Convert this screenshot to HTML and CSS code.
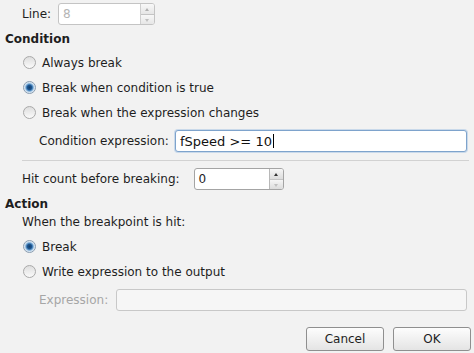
FILE: index.html
```html
<!DOCTYPE html>
<html>
<head>
<meta charset="utf-8">
<link rel="stylesheet" href="styles.css">
</head>
<body>
<div class="dlg">
  <div class="row line-row">
    <span class="lbl">Line:</span>
    <div class="spin spin-line disabled">
      <span class="spin-val">8</span>
      <div class="spin-btns"><span class="sb up"></span><span class="sb down"></span></div>
    </div>
  </div>
  <div class="heading h-cond">Condition</div>
  <div class="radio-row first"><span class="radio"></span><span>Always break</span></div>
  <div class="radio-row"><span class="radio on"></span><span>Break when condition is true</span></div>
  <div class="radio-row"><span class="radio"></span><span>Break when the expression changes</span></div>
  <div class="row cond-row">
    <span class="lbl">Condition expression:</span>
    <div class="field focus"><span>fSpeed &gt;= 10</span><span class="caret"></span></div>
  </div>
  <div class="sep"></div>
  <div class="row hit-row">
    <span class="lbl">Hit count before breaking:</span>
    <div class="spin spin-hit">
      <span class="spin-val">0</span>
      <div class="spin-btns"><span class="sb up active"></span><span class="sb down"></span></div>
    </div>
  </div>
  <div class="heading h-act">Action</div>
  <div class="row when-row">When the breakpoint is hit:</div>
  <div class="radio-row first2"><span class="radio on"></span><span>Break</span></div>
  <div class="radio-row"><span class="radio"></span><span>Write expression to the output</span></div>
  <div class="row expr-row">
    <span class="lbl dis">Expression:</span>
    <div class="field dis-field"></div>
  </div>
  <div class="buttons">
    <button class="btn">Cancel</button>
    <button class="btn">OK</button>
  </div>
</div>
</body>
</html>
```

FILE: styles.css
```css
html, body {
  margin: 0;
  padding: 0;
  background: #f2f2f2;
}
body {
  width: 474px;
  height: 353px;
  overflow: hidden;
  font-family: "DejaVu Sans", sans-serif;
  font-size: 12px;
  color: #1e1e1e;
}
.dlg {
  display: flex;
  flex-direction: column;
  padding-top: 3px;
}
.row {
  display: flex;
  align-items: center;
}
.line-row {
  height: 22px;
  margin-left: 22px;
}
.line-row .lbl { width: 36px; }
.spin {
  display: flex;
  height: 22px;
  box-sizing: border-box;
  border: 1px solid #a4a4a4;
  border-radius: 3px;
  background: #fff;
  overflow: hidden;
}
.spin-val {
  flex: 1;
  display: flex;
  align-items: center;
  padding-left: 4px;
}
.spin-line { width: 97px; border-color: #c4c4c4; }
.spin-line .spin-val { color: #b4b4b4; }
.spin-hit { width: 90px; margin-left: 14px; }
.spin-btns {
  width: 13px;
  display: flex;
  flex-direction: column;
  border-left: 1px solid #b8b8b8;
}
.sb {
  flex: 1;
  position: relative;
  background: linear-gradient(#f6f6f6, #dcdcdc);
}
.sb.down { border-top: 1px solid #c4c4c4; }
.sb::after {
  content: "";
  position: absolute;
  left: 4px;
  top: 4px;
  border-left: 2px solid transparent;
  border-right: 2px solid transparent;
}
.sb.up::after { border-bottom: 3px solid #b0b0b0; }
.sb.down::after { border-top: 3px solid #c0c0c0; }
.sb.up.active::after { border-bottom-color: #333; }
.disabled .sb { background: linear-gradient(#f8f8f8, #e6e6e6); }
.disabled .spin-btns { border-left-color: #cfcfcf; }
.heading {
  font-weight: bold;
  height: 18px;
  line-height: 18px;
  margin-left: 5px;
}
.h-cond { margin-top: 5px; }
.h-act { margin-top: 5px; }
.radio-row {
  display: flex;
  align-items: center;
  height: 25px;
  margin-left: 23px;
}
.radio-row.first { margin-top: 2px; }
.radio-row.first2 { margin-top: 3px; }
.radio {
  width: 13px;
  height: 13px;
  box-sizing: border-box;
  border-radius: 50%;
  border: 1px solid #a9a9a9;
  background: linear-gradient(#dedede, #fafafa);
  margin-right: 6px;
}
.radio.on {
  border-color: #8a9db0;
  background: radial-gradient(circle, #123f6c 0, #1d5590 2.2px, #5b95c9 3.4px, #c8dcee 4.6px, #eef3f8 6px);
}
.cond-row {
  height: 22px;
  margin-top: 5px;
  margin-left: 39px;
}
.cond-row .lbl { width: 136px; }
.field {
  flex: 1;
  height: 22px;
  box-sizing: border-box;
  border: 1px solid #b0b0b0;
  border-radius: 3px;
  background: #fff;
  margin-right: 7px;
  display: flex;
  align-items: center;
  padding-left: 4px;
}
.field.focus {
  border: 1px solid #7ea3cc;
  box-shadow: 0 0 0 1px #c9d9ea;
  font-size: 13px;
  color: #111;
}
.caret {
  width: 1px;
  height: 14px;
  background: #000;
  margin-left: 1px;
}
.sep {
  height: 1px;
  background: #d2d2d2;
  margin: 8px 5px 0 22px;
}
.hit-row {
  height: 22px;
  margin-top: 7px;
  margin-left: 22px;
}
.when-row {
  height: 18px;
  margin-left: 22px;
}
.expr-row {
  height: 22px;
  margin-top: 5px;
  margin-left: 39px;
}
.expr-row .lbl { width: 77px; }
.lbl.dis { color: #a6a6a6; }
.dis-field { border-color: #c8c8c8; background: #f6f6f6; }
.buttons {
  display: flex;
  justify-content: flex-end;
  gap: 9px;
  margin-top: 16px;
  margin-right: 3px;
}
.btn {
  width: 78px;
  height: 24px;
  box-sizing: border-box;
  border: 1px solid #8f8f8f;
  border-radius: 3px;
  background: linear-gradient(#fdfdfd, #e4e4e4);
  font-family: "DejaVu Sans", sans-serif;
  font-size: 12px;
  color: #1e1e1e;
  padding: 0;
}
```
